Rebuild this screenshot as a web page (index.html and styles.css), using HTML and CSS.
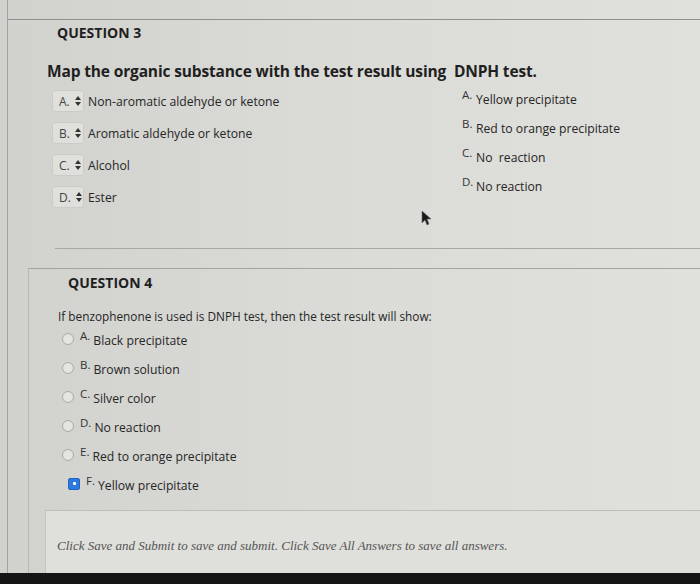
FILE: index.html
```html
<!DOCTYPE html>
<html lang="en">
<head>
<meta charset="utf-8">
<title>Question 3 and 4</title>
<link rel="stylesheet" href="styles.css">
</head>
<body>
<div class="screen">
  <div class="page">
    <div class="topbox"></div>

    <section class="q3">
      <h2 class="qtitle">QUESTION 3</h2>
      <p class="prompt">Map the organic substance with the test result using&nbsp; DNPH test.</p>
      <div class="match">
        <div class="left-col">
          <div class="lrow"><span class="sel">A. <svg class="arrows" viewBox="0 0 6 10"><path d="M3 0 L6 4 L0 4 Z M0 6 L6 6 L3 10 Z"/></svg></span><span class="ltext">Non-aromatic aldehyde or ketone</span></div>
          <div class="lrow"><span class="sel">B. <svg class="arrows" viewBox="0 0 6 10"><path d="M3 0 L6 4 L0 4 Z M0 6 L6 6 L3 10 Z"/></svg></span><span class="ltext">Aromatic aldehyde or ketone</span></div>
          <div class="lrow"><span class="sel">C. <svg class="arrows" viewBox="0 0 6 10"><path d="M3 0 L6 4 L0 4 Z M0 6 L6 6 L3 10 Z"/></svg></span><span class="ltext">Alcohol</span></div>
          <div class="lrow"><span class="sel">D. <svg class="arrows" viewBox="0 0 6 10"><path d="M3 0 L6 4 L0 4 Z M0 6 L6 6 L3 10 Z"/></svg></span><span class="ltext">Ester</span></div>
        </div>
        <div class="right-col">
          <div class="rrow"><span class="tag">A.</span><span class="rtext">Yellow precipitate</span></div>
          <div class="rrow"><span class="tag">B.</span><span class="rtext">Red to orange precipitate</span></div>
          <div class="rrow"><span class="tag">C.</span><span class="rtext">No&nbsp; reaction</span></div>
          <div class="rrow"><span class="tag">D.</span><span class="rtext">No reaction</span></div>
        </div>
      </div>
    </section>

    <div class="sep1"></div>

    <section class="q4">
      <h2 class="qtitle q4title">QUESTION 4</h2>
      <p class="qtext">If benzophenone is used is DNPH test, then the test result will show:</p>
      <div class="options">
        <div class="opt"><span class="radio"></span><span class="tag">A.</span><span class="otext">Black precipitate</span></div>
        <div class="opt"><span class="radio"></span><span class="tag">B.</span><span class="otext">Brown solution</span></div>
        <div class="opt"><span class="radio"></span><span class="tag">C.</span><span class="otext">Silver color</span></div>
        <div class="opt"><span class="radio"></span><span class="tag">D.</span><span class="otext">No reaction</span></div>
        <div class="opt"><span class="radio"></span><span class="tag">E.</span><span class="otext">Red to orange precipitate</span></div>
        <div class="opt"><span class="radio checked"></span><span class="tag">F.</span><span class="otext">Yellow precipitate</span></div>
      </div>
      <div class="footer">
        <p class="footnote">Click Save and Submit to save and submit. Click Save All Answers to save all answers.</p>
      </div>
    </section>
  </div>
  <div class="bottombar"></div>

  <svg class="cursor" viewBox="0 0 10 16" width="10" height="16"><path d="M1 1 L1 13 L4 10 L6 15 L8 14 L6 9 L10 9 Z" fill="#1a1a1a" stroke="#6a6a6a" stroke-width="0.6"/></svg>
</div>
</body>
</html>
```

FILE: styles.css
```css
html, body {
  margin: 0;
  padding: 0;
}
body {
  width: 700px;
  height: 584px;
  overflow: hidden;
  font-family: "Open Sans", "Noto Sans", sans-serif;
  color: #2a2a2a;
  background: #dadad6;
}
.screen {
  position: relative;
  width: 700px;
  height: 584px;
  display: flex;
  flex-direction: column;
  background: linear-gradient(90deg, #d1d1ce 0%, #dadad6 45%, #e0e0dc 100%);
}
.page {
  flex: 1;
  margin-left: 7px;
  border-left: 1px solid #a2a2a0;
  display: flex;
  flex-direction: column;
}
.topbox {
  height: 19px;
  border-bottom: 1px solid #8f8f8d;
}
.q3 {
  padding-left: 39px;
}
.qtitle {
  margin: 3px 0 0 0;
  padding-left: 10px;
  font-size: 14px;
  line-height: 20px;
  font-weight: 700;
  color: #1f1f1f;
}
.prompt {
  margin: 17px 0 0 0;
  font-size: 15.5px;
  line-height: 22px;
  font-weight: 700;
  color: #1f1f1f;
  letter-spacing: -0.15px;
}
.match {
  display: flex;
}
.left-col {
  width: 410px;
  margin-left: 5px;
  padding-top: 8px;
  display: flex;
  flex-direction: column;
  gap: 10px;
}
.lrow {
  height: 22px;
  display: flex;
  align-items: center;
}
.sel {
  box-sizing: border-box;
  width: 32px;
  height: 22px;
  display: flex;
  align-items: center;
  padding-left: 6px;
  gap: 2px;
  border: 1px solid #cbcbc7;
  border-radius: 3px;
  background: #dfdfdb;
  font-size: 12px;
  color: #444;
}
.arrows {
  width: 6px;
  height: 10px;
  margin-left: 3px;
  fill: #333;
}
.ltext {
  margin-left: 4px;
  font-size: 12.2px;
  color: #262626;
}
.right-col {
  padding-top: 3px;
  display: flex;
  flex-direction: column;
}
.rrow {
  height: 29px;
  display: flex;
  align-items: center;
}
.tag {
  font-size: 11.5px;
  color: #333;
  position: relative;
  top: -5px;
  width: 14px;
}
.rtext {
  font-size: 12.2px;
  color: #262626;
}
.sep1 {
  margin: 40px 0 0 47px;
  border-top: 1px solid #a8a8a4;
}
.q4 {
  flex: 1;
  margin: 19px 0 0 20px;
  border-top: 1px solid #a4a4a0;
  border-left: 1px solid #b8b8b4;
  display: flex;
  flex-direction: column;
}
.q4title {
  margin-top: 4px;
  padding-left: 39px;
}
.qtext {
  margin: 14px 0 0 29px;
  font-size: 11.8px;
  line-height: 18px;
  color: #262626;
}
.options {
  margin: 1px 0 0 33px;
  display: flex;
  flex-direction: column;
}
.opt {
  height: 29px;
  display: flex;
  align-items: center;
}
.opt .tag {
  width: auto;
  margin-right: 3px;
}
.radio {
  box-sizing: border-box;
  width: 12px;
  height: 12px;
  border-radius: 50%;
  border: 1px solid #a9a9a6;
  background: #e4e4e0;
  margin-right: 6px;
  position: relative;
  top: -2px;
}
.radio.checked {
  border-radius: 2px;
  border: 1px solid #1f64c8;
  background: #2f78dc;
  margin-left: 6px;
  margin-right: 6px;
}
.radio.checked::after {
  content: "";
  position: absolute;
  left: 3.5px;
  top: 3.5px;
  width: 3px;
  height: 3px;
  background: #fff;
  border-radius: 1px;
}
.otext {
  font-size: 12.2px;
  color: #262626;
}
.footer {
  flex: 1;
  margin: 10px 0 0 16px;
  padding-top: 7px;
  border-top: 1px solid #bdbdb9;
  border-left: 1px solid #c2c2be;
  background: #dfdfdb;
  display: flex;
  align-items: center;
}
.footnote {
  margin: 0 0 0 11px;
  font-family: "Liberation Serif", "Times New Roman", serif;
  font-style: italic;
  font-size: 13px;
  color: #555;
}
.bottombar {
  height: 11px;
  background: #151515;
}
.cursor {
  position: absolute;
  left: 421px;
  top: 210px;
}
```
